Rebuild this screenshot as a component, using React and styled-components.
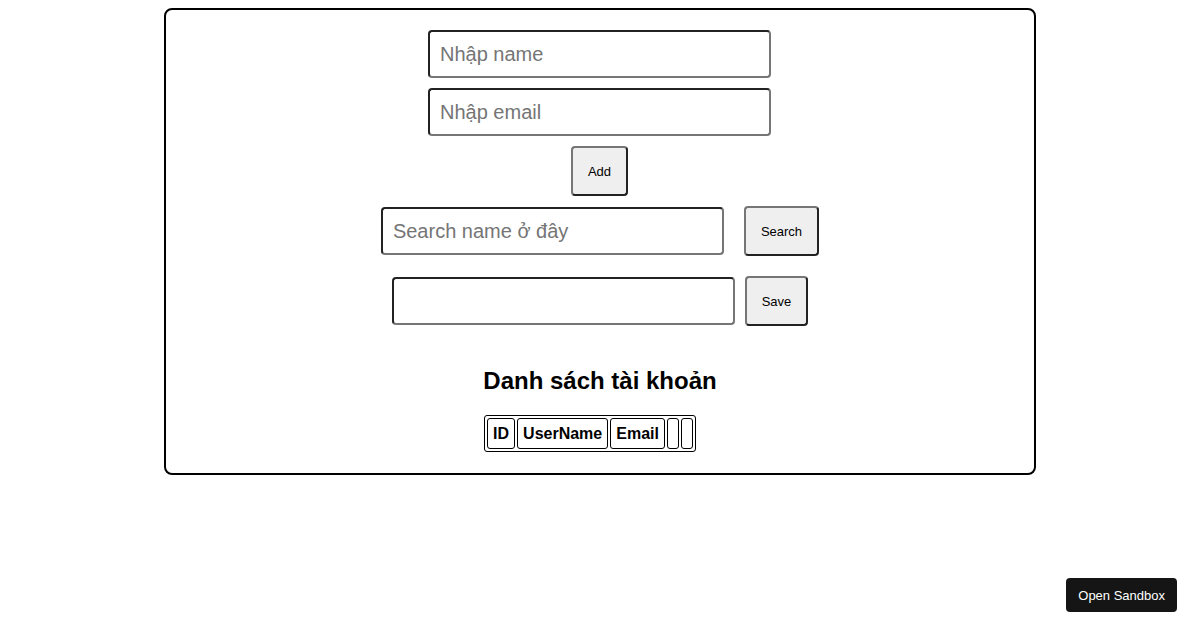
import React, { useState } from 'react';
import styled, { createGlobalStyle } from 'styled-components';

const GlobalStyle = createGlobalStyle`
    body {
        margin: 8px;
        background: #fff;
        font-family: "Liberation Sans", Arial, sans-serif;
        color: #000;
    }
`;

const Card = styled.div`
    box-sizing: border-box;
    width: 872px;
    margin: 0 auto;
    padding: 20px 20px 21px;
    border: 2px solid #000;
    border-radius: 8px;
    display: flex;
    flex-direction: column;
    align-items: center;
`;

const TextInput = styled.input`
    box-sizing: border-box;
    width: 343px;
    height: 48px;
    margin: 0;
    padding: 0 10px;
    font-family: "Liberation Sans", Arial, sans-serif;
    font-size: 20px;
    color: #000;
    background: #fff;
    border: 2px solid;
    border-color: #222 #767676 #767676 #222;
    border-radius: 4px;
    outline: none;

    &::placeholder {
        color: #757575;
    }
`;

const Button = styled.button`
    box-sizing: border-box;
    height: 50px;
    margin: 0;
    padding: 0 15px;
    font-family: "Liberation Sans", Arial, sans-serif;
    font-size: 13px;
    color: #000;
    background: #efefef;
    border: 2px solid;
    border-color: #767676 #222 #222 #767676;
    border-radius: 4px;
    cursor: pointer;
`;

const Stack = styled.div`
    display: flex;
    flex-direction: column;
    align-items: center;
    gap: 10px;
    margin-right: 1px;
`;

const Row = styled.div`
    display: flex;
    align-items: center;
    gap: ${(p) => p.$gap}px;
    margin-top: ${(p) => p.$top}px;
`;

const Title = styled.h2`
    margin: 41px 0 21px;
    font-size: 24px;
    font-weight: 700;
    line-height: 27px;
`;

const Table = styled.table`
    margin-right: 20px;
    border: 1px solid #000;
    border-radius: 3px;
    border-spacing: 2px;
`;

const Head = styled.th`
    height: 31px;
    box-sizing: border-box;
    padding: 0 5px;
    border: 1px solid #000;
    border-radius: 3px;
    font-size: 16px;
    font-weight: 700;
`;

const SandboxLink = styled.a`
    position: fixed;
    right: 23px;
    bottom: 18px;
    box-sizing: border-box;
    height: 34px;
    padding: 0 12px;
    display: flex;
    align-items: center;
    background: #151515;
    color: #fff;
    font-size: 13px;
    border-radius: 4px;
    text-decoration: none;
`;

const App = () => {
    const [name, setName] = useState('');
    const [email, setEmail] = useState('');
    const [search, setSearch] = useState('');
    const [edit, setEdit] = useState('');

    return (
        <>
            <GlobalStyle />
            <Card>
                <Stack>
                    <TextInput placeholder="Nhập name" value={name} onChange={(e) => setName(e.target.value)} />
                    <TextInput placeholder="Nhập email" value={email} onChange={(e) => setEmail(e.target.value)} />
                    <Button>Add</Button>
                </Stack>
                <Row $gap={20} $top={10}>
                    <TextInput placeholder="Search name ở đây" value={search} onChange={(e) => setSearch(e.target.value)} />
                    <Button>Search</Button>
                </Row>
                <Row $gap={10} $top={20}>
                    <TextInput value={edit} onChange={(e) => setEdit(e.target.value)} />
                    <Button>Save</Button>
                </Row>
                <Title>Danh sách tài khoản</Title>
                <Table>
                    <thead>
                        <tr>
                            <Head>ID</Head>
                            <Head>UserName</Head>
                            <Head>Email</Head>
                            <Head />
                            <Head />
                        </tr>
                    </thead>
                </Table>
            </Card>
            <SandboxLink href="#">Open Sandbox</SandboxLink>
        </>
    );
};

export default App;
